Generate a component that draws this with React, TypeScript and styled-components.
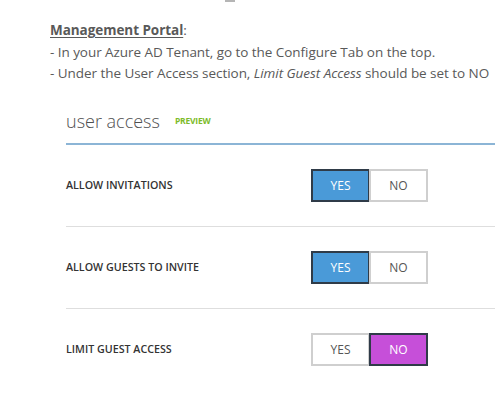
import React from 'react';
import styled, { createGlobalStyle } from 'styled-components';

const GlobalStyle = createGlobalStyle`
	html, body {
		margin: 0;
		padding: 0;
		background: #ffffff;
	}
	body {
		font-family: 'Open Sans', 'Noto Sans', sans-serif;
		color: #555555;
	}
`;

const Page = styled.div`
	width: 495px;
	height: 412px;
	overflow: hidden;
	display: flex;
	flex-direction: column;
`;

const TopScrap = styled.div`
	width: 10px;
	height: 2px;
	margin-left: 225px;
	background: #b5b5b5;
`;

const Notes = styled.div`
	margin: 18px 0 0 50px;
	font-size: 13.5px;
	line-height: 21.5px;
	color: #595959;
	white-space: nowrap;
	letter-spacing: -0.05px;
`;

const Heading = styled.span`
	font-weight: 700;
	text-decoration: underline;
	text-underline-offset: 2px;
`;

const Panel = styled.section`
	margin: 24px 0 0 66px;
`;

const PanelHeader = styled.div`
	display: flex;
	align-items: baseline;
	gap: 15px;
	height: 34px;
	border-bottom: 2px solid #8cb5d6;
`;

const Title = styled.h2`
	margin: 0;
	font-size: 18px;
	font-weight: 300;
	color: #505050;
	line-height: 24px;
`;

const Badge = styled.span`
	font-size: 8.5px;
	font-weight: 700;
	color: #7dbb2a;
	letter-spacing: -0.2px;
	position: relative;
	top: -4px;
`;

const Row = styled.div<{ $last?: boolean }>`
	display: flex;
	align-items: center;
	height: 81px;
	border-bottom: ${({ $last }) => ($last ? 'none' : '1px solid #dedede')};
`;

const Label = styled.div`
	width: 245px;
	font-size: 10.7px;
	font-weight: 600;
	color: #333333;
`;

const Toggle = styled.div`
	display: flex;
`;

const Segment = styled.div<{ $on: boolean; $tone: 'blue' | 'purple' }>`
	box-sizing: border-box;
	width: 59px;
	height: 33px;
	display: flex;
	align-items: center;
	justify-content: center;
	font-size: 12px;
	color: ${({ $on }) => ($on ? '#ffffff' : '#555555')};
	background: ${({ $on, $tone }) => (!$on ? '#ffffff' : $tone === 'blue' ? '#4a9ad8' : '#c64fd9')};
	border: 2px solid ${({ $on }) => ($on ? '#2f3b48' : '#cfcfcf')};
	& + & {
		margin-left: -1px;
	}
`;

const settings = [
	{ label: 'ALLOW INVITATIONS', value: true },
	{ label: 'ALLOW GUESTS TO INVITE', value: true },
	{ label: 'LIMIT GUEST ACCESS', value: false },
];

export default function App(): JSX.Element {
	return (
		<Page>
			<GlobalStyle />
			<TopScrap />
			<Notes>
				<div>
					<Heading>Management Portal</Heading>:
				</div>
				<div>- In your Azure AD Tenant, go to the Configure Tab on the top.</div>
				<div>
					- Under the User Access section, <i>Limit Guest Access</i> should be set to NO
				</div>
			</Notes>
			<Panel>
				<PanelHeader>
					<Title>user access</Title>
					<Badge>PREVIEW</Badge>
				</PanelHeader>
				{settings.map((s, i) => (
					<Row key={s.label} $last={i === settings.length - 1}>
						<Label>{s.label}</Label>
						<Toggle>
							<Segment $on={s.value} $tone="blue">YES</Segment>
							<Segment $on={!s.value} $tone="purple">NO</Segment>
						</Toggle>
					</Row>
				))}
			</Panel>
		</Page>
	);
}
